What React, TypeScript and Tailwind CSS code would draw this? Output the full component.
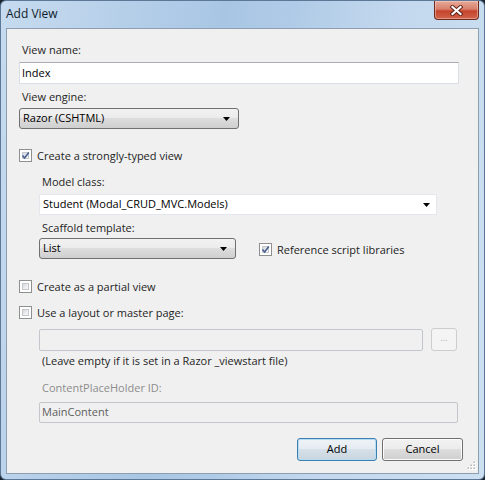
const font = "font-['Segoe_UI','Open_Sans',sans-serif] text-[11px]";

function Checkbox({ checked = false }: { checked?: boolean }) {
  return (
    <span className="relative flex h-[13px] w-[13px] shrink-0 border border-[#8e8f8f] bg-white p-[2px]">
      <span className="h-full w-full border border-[#c4c7cc] bg-[linear-gradient(135deg,#d5d8dc_0%,#eceef0_60%,#f8f8f8_100%)]" />
      {checked && (
        <svg className="absolute left-[1px] top-[1px]" width="9" height="9" viewBox="0 0 9 9">
          <path d="M1.5 4.5 L3.6 7 L7.8 1.5" fill="none" stroke="#4a5f8f" strokeWidth="1.6" />
        </svg>
      )}
    </span>
  );
}

function Arrow() {
  return (
    <svg width="7" height="4" viewBox="0 0 7 4">
      <path d="M0 0 H7 L3.5 4 Z" fill="#000" />
    </svg>
  );
}

function DropDown({ text, width }: { text: string; width: string }) {
  return (
    <div
      className={`flex h-[21px] ${width} items-center justify-between rounded-[3px] border border-[#707070] bg-[linear-gradient(#f2f2f2_0%,#ebebeb_50%,#dddddd_50%,#cfcfcf_100%)] pl-[3px] pr-[8px] text-[#000]`}
    >
      <span>{text}</span>
      <Arrow />
    </div>
  );
}

function Label({ children, muted = false }: { children: React.ReactNode; muted?: boolean }) {
  return (
    <div className={`h-[15px] pl-[3px] leading-[15px] ${muted ? 'text-[#8d8d8d]' : 'text-[#1e1e1e]'}`}>{children}</div>
  );
}

function CheckRow({ checked, children, className = '' }: { checked?: boolean; children: React.ReactNode; className?: string }) {
  return (
    <div className={`flex h-[15px] items-center gap-[5px] leading-[15px] text-[#1e1e1e] ${className}`}>
      <Checkbox checked={checked} />
      <span>{children}</span>
    </div>
  );
}

function Button({ children, primary = false }: { children: React.ReactNode; primary?: boolean }) {
  return (
    <div
      className={`flex h-[23px] items-center justify-center rounded-[3px] border text-[#000] ${
        primary
          ? 'w-[80px] border-[#3c7fb1] bg-[linear-gradient(#eef3f7_0%,#e4ebf1_50%,#d6e0e8_50%,#c9d5df_100%)] shadow-[inset_0_0_0_1px_#b6dcf3]'
          : 'w-[81px] border-[#707070] bg-[linear-gradient(#f2f2f2_0%,#ebebeb_50%,#dddddd_50%,#cfcfcf_100%)] shadow-[inset_0_0_0_1px_#fcfcfc]'
      }`}
    >
      {children}
    </div>
  );
}

export default function App() {
  return (
    <div className={`h-[480px] w-[485px] bg-[#1b2633] ${font}`}>
      <div className="relative flex h-full flex-col rounded-[6px] border border-[#5d7896] bg-[linear-gradient(100deg,#c6dbef_0%,#b6cfe9_22%,#a8c6e4_40%,#b0cbe7_52%,#c3d8ee_70%,#cde0f2_100%)]">
        {/* Title bar */}
        <div className="flex h-[27px] shrink-0 items-center pl-[5px] pb-[1px] text-[12px] text-[#0f1d2c]">
          Add View
        </div>
        <div className="absolute right-[5px] top-0 flex h-[19px] w-[45px] items-center justify-center rounded-b-[4px] border border-t-0 border-[#6d2a1f] bg-[linear-gradient(#e7a99a_0%,#d8806c_45%,#c5452d_55%,#d0634a_100%)] shadow-[inset_0_0_0_1px_rgba(255,220,210,0.45)]">
          <svg width="13" height="11" viewBox="0 0 13 11">
            <path d="M2.5 2 L10.5 9 M10.5 2 L2.5 9" stroke="#5b2116" strokeWidth="4" strokeLinecap="square" />
            <path d="M2.5 2 L10.5 9 M10.5 2 L2.5 9" stroke="#ffffff" strokeWidth="2.2" strokeLinecap="square" />
          </svg>
        </div>

        {/* Client area */}
        <div className="relative mx-[5px] h-[446px] border border-[#8e9eb1] bg-[#f0f0f0] pl-[12px] pt-[13px]">
          <Label>View name:</Label>
          <div className="mt-[5px] flex h-[22px] w-[440px] items-center border border-[#dadfe5] border-t-[#abadb3] bg-white pl-[2px] text-[#000]">
            Index
          </div>

          <div className="mt-[5px]">
            <Label>View engine:</Label>
          </div>
          <div className="mt-[4px]">
            <DropDown text="Razor (CSHTML)" width="w-[220px]" />
          </div>

          <CheckRow checked className="mt-[19px]">Create a strongly-typed view</CheckRow>

          <div className="pl-[20px]">
            <div className="mt-[11px]">
              <Label>Model class:</Label>
            </div>
            <div className="mt-[5px] flex h-[21px] w-[398px] items-center justify-between border border-[#e3e6ea] bg-white pl-[3px] pr-[6px] text-[#000]">
              <span>Student (Modal_CRUD_MVC.Models)</span>
              <Arrow />
            </div>
            <div className="mt-[5px]">
              <Label>Scaffold template:</Label>
            </div>
            <div className="mt-[3px] flex items-center">
              <DropDown text="List" width="w-[197px]" />
              <CheckRow checked className="ml-[23px] mt-[2px]">Reference script libraries</CheckRow>
            </div>
          </div>

          <CheckRow className="mt-[20px]">Create as a partial view</CheckRow>
          <CheckRow className="mt-[11px]">Use a layout or master page:</CheckRow>

          <div className="pl-[20px]">
            <div className="mt-[8px] flex items-center gap-[8px]">
              <div className="h-[22px] w-[384px] rounded-[2px] border border-[#c3c6ca] bg-[#f0f0f0]" />
              <div className="flex h-[23px] w-[26px] items-center justify-center rounded-[3px] border border-[#cdcdcd] bg-[#f4f4f4] pb-[3px] text-[9px] text-[#b0b0b0]">
                ...
              </div>
            </div>
            <div className="mt-[2px]">
              <Label>(Leave empty if it is set in a Razor _viewstart file)</Label>
            </div>
            <div className="mt-[12px]">
              <Label muted>ContentPlaceHolder ID:</Label>
            </div>
            <div className="mt-[7px] flex h-[21px] w-[419px] items-center rounded-[2px] border border-[#c3c6ca] bg-[#f0f0f0] pl-[2px] text-[#5e5e5e]">
              MainContent
            </div>
          </div>

          <div className="mt-[15px] flex w-[444px] justify-end gap-[5px]">
            <Button primary>Add</Button>
            <Button>Cancel</Button>
          </div>

          {/* size grip */}
          <svg className="absolute bottom-[2px] right-[2px]" width="10" height="10" viewBox="0 0 10 10">
            {[
              [8, 0],
              [8, 3],
              [5, 3],
              [8, 6],
              [5, 6],
              [2, 6],
            ].map(([x, y]) => (
              <g key={`${x}-${y}`}>
                <rect x={x} y={y + 1} width="2" height="2" fill="#ffffff" />
                <rect x={x - 0.5} y={y + 0.5} width="1.5" height="1.5" fill="#b8b8b8" />
              </g>
            ))}
          </svg>
        </div>
      </div>
    </div>
  );
}
